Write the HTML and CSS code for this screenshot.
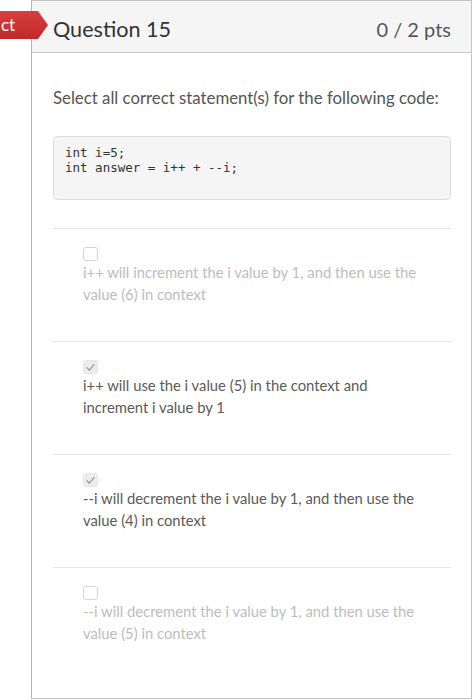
FILE: index.html
```html
<!DOCTYPE html>
<html lang="en">
<head>
<meta charset="utf-8">
<title>Question 15</title>
<link rel="stylesheet" href="styles.css">
</head>
<body>
<div class="page">
  <div class="gutter"></div>
  <div class="card">
    <div class="tag">ct</div>
    <header class="card-head">
      <h2 class="q-title">Question 15</h2>
      <span class="q-pts">0 / 2 pts</span>
    </header>
    <div class="card-body">
      <p class="q-text">Select all correct statement(s) for the following code:</p>
      <pre class="code">int i=5;
int answer = i++ + --i;</pre>
      <ul class="answers">
        <li class="answer muted">
          <span class="box"></span>
          <div class="a-text">i++ will increment the i value by 1, and then use the value (6) in context</div>
        </li>
        <li class="answer">
          <span class="box checked"><svg viewBox="0 0 15 15" width="15" height="15"><path d="M4 7.8 L6.4 10.2 L11 4.6" fill="none" stroke="#9a9a9a" stroke-width="1.3" stroke-linecap="round" stroke-linejoin="round"/></svg></span>
          <div class="a-text">i++ will use the i value (5) in the context and increment i value by 1</div>
        </li>
        <li class="answer">
          <span class="box checked"><svg viewBox="0 0 15 15" width="15" height="15"><path d="M4 7.8 L6.4 10.2 L11 4.6" fill="none" stroke="#9a9a9a" stroke-width="1.3" stroke-linecap="round" stroke-linejoin="round"/></svg></span>
          <div class="a-text">--i will decrement the i value by 1, and then use the value (4) in context</div>
        </li>
        <li class="answer muted last">
          <span class="box"></span>
          <div class="a-text">--i will decrement the i value by 1, and then use the value (5) in context</div>
        </li>
      </ul>
    </div>
  </div>
</div>
</body>
</html>
```

FILE: styles.css
```css
* { box-sizing: border-box; }
html, body { margin: 0; padding: 0; background: #fff; }
body { font-family: Lato, "Open Sans", Arial, sans-serif; color: #555; }

.page {
  display: flex;
  align-items: flex-start;
  height: 700px;
  overflow: hidden;
}
.gutter {
  width: 31px;
  flex: none;
  align-self: stretch;
  background: #fff;
}
.card {
  position: relative;
  width: 441px;
  height: 699px;
  border: 1px solid #c4c4c4;
  border-left-color: #b5b5b5;
  background: #fff;
}
.tag {
  position: absolute;
  left: -32px;
  top: 10px;
  width: 48px;
  height: 28px;
  padding-left: 1px;
  background: linear-gradient(#d8403f, #c0272a);
  clip-path: polygon(0 0, 38px 0, 48px 14px, 38px 28px, 0 28px);
  color: #fff;
  font-size: 17px;
  line-height: 27px;
  z-index: 2;
}
.card-head {
  height: 52px;
  background: #f5f5f5;
  border-bottom: 1px solid #c8c8c8;
  display: flex;
  align-items: center;
  justify-content: space-between;
  padding: 4px 20px 0 21px;
}
.q-title {
  margin: 0;
  font-weight: 400;
  font-size: 21.6px;
  color: #333;
}
.q-pts {
  font-size: 20px;
  color: #555;
}
.card-body {
  padding: 33px 20px 0 21px;
}
.q-text {
  margin: 0;
  font-size: 16.8px;
  line-height: 23px;
  color: #555;
}
.code {
  margin: 27px 0 0;
  height: 64px;
  background: #f5f5f5;
  border: 1px solid #ddd;
  border-radius: 5px;
  padding: 8px 11px;
  font-family: "DejaVu Sans Mono", "Liberation Mono", monospace;
  font-size: 12.5px;
  line-height: 15px;
  color: #333;
}
.answers {
  list-style: none;
  margin: 28px 0 0;
  padding: 0;
}
.answer {
  border-top: 1px solid #e6e6e6;
  padding: 18px 0 36px 30px;
}
.answer.last { padding-bottom: 0; }
.box {
  display: block;
  width: 15px;
  height: 14px;
  border: 1px solid #d6d6d6;
  border-radius: 3px;
  background: #fff;
}
.box.checked {
  border-color: #e6e6e6;
  background: #ececec;
}
.box svg { display: block; margin: -1px 0 0 -1px; }
.a-text {
  font-size: 14.8px;
  line-height: 22px;
  color: #5a5a5a;
  width: 345px;
}
.answer.muted .a-text { color: #bdbdbd; }
```
